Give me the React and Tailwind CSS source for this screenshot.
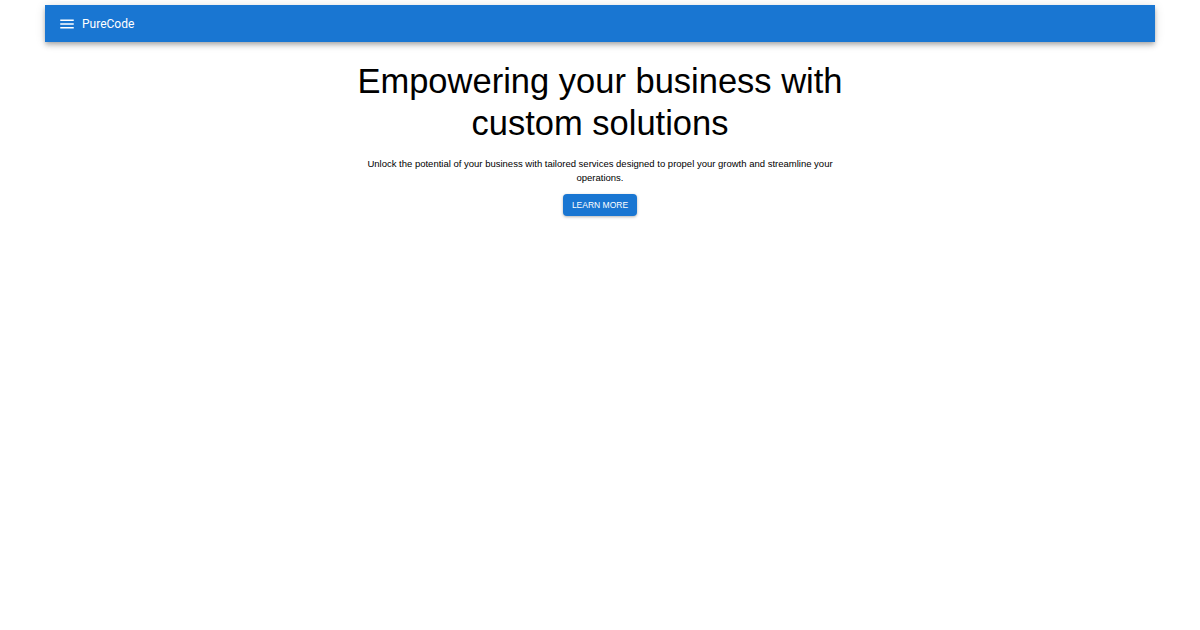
import React from "react";

export default function App() {
  return (
    <div className="min-h-[630px] w-full bg-white" style={{ fontFamily: '"Liberation Sans", Arial, sans-serif' }}>
      <div className="px-[45px] pt-[5px]">
        <header className="flex h-[37px] items-center bg-[#1976d2] px-[13px] text-white shadow-[0_2px_4px_-1px_rgba(0,0,0,0.2),0_4px_5px_0_rgba(0,0,0,0.14),0_1px_10px_0_rgba(0,0,0,0.12)]">
          <svg width="18" height="18" viewBox="0 0 24 24" fill="currentColor" className="mr-[6px]">
            <path d="M3 18h18v-2H3v2zm0-5h18v-2H3v2zm0-7v2h18V6H3z" />
          </svg>
          <span className="text-[12px]" style={{ fontFamily: 'Roboto, "Liberation Sans", sans-serif' }}>PureCode</span>
        </header>
      </div>
      <main className="mx-auto flex w-[500px] flex-col items-center pt-[18px] text-center">
        <h1 className="text-[34.5px] leading-[42px] text-black">Empowering your business with custom solutions</h1>
        <p className="mt-[13px] text-[9.5px] leading-[14px] text-black">
          Unlock the potential of your business with tailored services designed to propel your growth and streamline your operations.
        </p>
        <button className="mt-[9px] h-[22px] rounded-[4px] bg-[#1976d2] px-[9px] text-[8.5px] uppercase text-white shadow-[0_1px_3px_rgba(0,0,0,0.3)]">
          Learn More
        </button>
      </main>
    </div>
  );
}
